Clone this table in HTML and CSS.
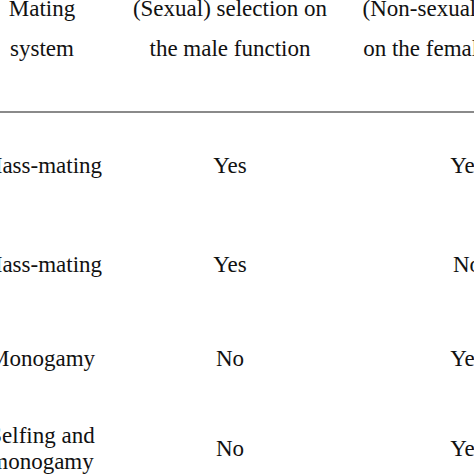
FILE: index.html
```html
<!DOCTYPE html>
<html>
<head>
<meta charset="utf-8">
<link rel="stylesheet" href="styles.css">
</head>
<body>
<div class="table">
  <div class="head">
    <div class="cell">Mating<br>system</div>
    <div class="cell">(Sexual) selection on<br>the male function</div>
    <div class="cell">(Non-sexual) selection<br>on the female function</div>
  </div>
  <div class="body">
    <div class="cell">Mass-mating</div>
    <div class="cell">Yes</div>
    <div class="cell">Yes</div>
    <div class="cell">Mass-mating</div>
    <div class="cell">Yes</div>
    <div class="cell">No</div>
    <div class="cell">Monogamy</div>
    <div class="cell">No</div>
    <div class="cell">Yes</div>
    <div class="cell">Selfing and<br>monogamy</div>
    <div class="cell">No</div>
    <div class="cell">Yes</div>
  </div>
</div>
</body>
</html>
```
FILE: styles.css
```css
html, body {
  margin: 0;
  padding: 0;
  background: #ffffff;
  overflow: hidden;
}
.table {
  width: 626px;
  margin-left: -34px;
  margin-top: -11px;
  font-family: "Liberation Serif", "Times New Roman", serif;
  font-size: 23px;
  color: #111111;
}
.head {
  display: grid;
  grid-template-columns: 152px 224px 250px;
  line-height: 40px;
  padding-bottom: 42px;
  border-bottom: 2px solid #8a8a8a;
}
.body {
  display: grid;
  grid-template-columns: 152px 224px 250px;
  grid-template-rows: 105px 93px 95px 86px;
  line-height: 26px;
  align-items: center;
}
.cell {
  text-align: center;
}
```
